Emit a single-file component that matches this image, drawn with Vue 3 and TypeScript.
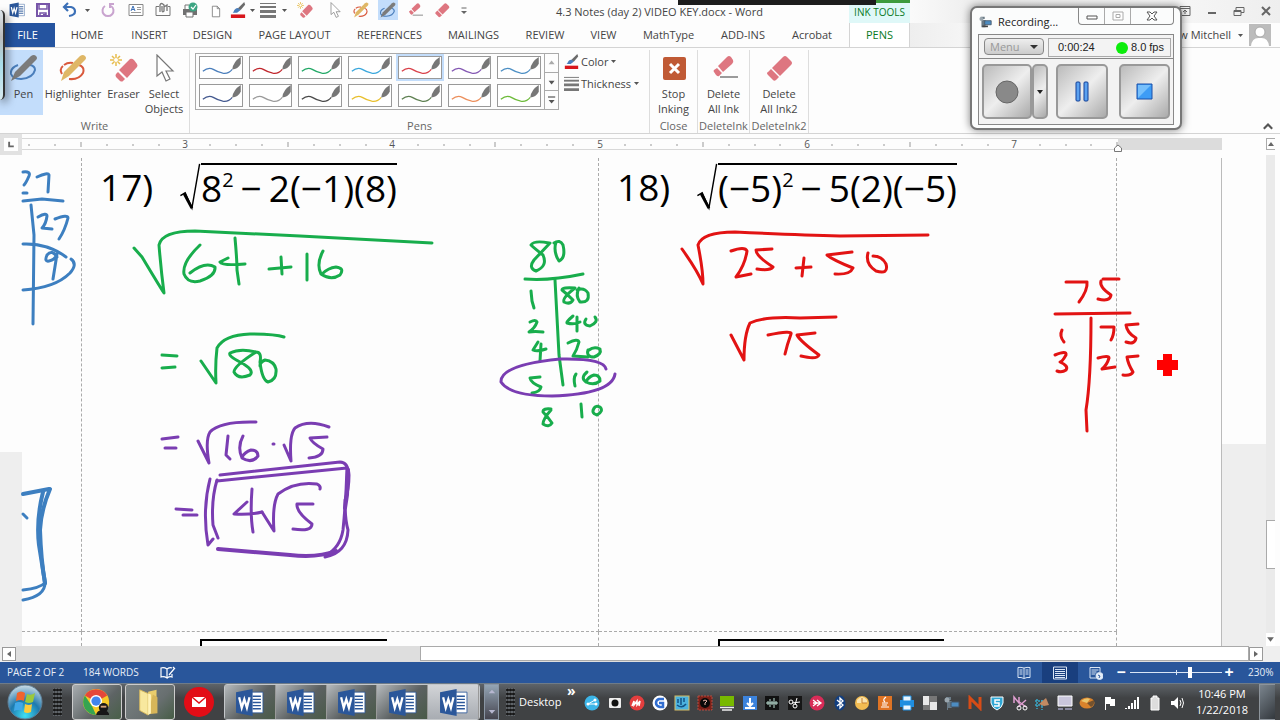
<script setup lang="ts">
interface Ink { color: string; width: number; strokes: string[] }

const tabs = ['HOME', 'INSERT', 'DESIGN', 'PAGE LAYOUT', 'REFERENCES', 'MAILINGS', 'REVIEW', 'VIEW', 'MathType', 'ADD-INS', 'Acrobat']
const quick = ['word', 'save', 'undo', 'caret', 'redo', 'card', 'clip', 'printer', 'page', 'color', 'caret', 'lines', 'caret', 'sparkle', 'cursor', 'highlighter', 'pen', 'erase-line', 'eraser', 'more']
const pens = ['#4a7ebb', '#c0262c', '#22a866', '#3aa7dc', '#d9414a', '#8458b3', '#4d8fc4', '#44598f', '#9a9a9a', '#4a4a4a', '#e8bf2d', '#5f8052', '#ec8f5c', '#6dbb3a']
const wordWindows = [1, 2, 3, 4, 5]
const tray = ['share', 'camera', 'm', 'g', 'finder', 'bug', 'monitor', 'download', 'wave', 'scissors', 'arrow', 'bluetooth', 'ball', 'java', 'print', 'blocks', 'recorder', 'n', 'shield', 'snip', 'tablet', 'display', 'disc', 'flag', 'signal', 'battery', 'sound']

const inks: Ink[] = [
  { color: '#3d7fc0', width: 3, strokes: [
    'M23 172Q31 171 29 176Q26 183 24 185M23 193h4', 'M37 177Q48 172 49 175L48 192', 'M23 201L42 199 63 201', 'M31 205L34 235 33 324',
    'M38 217Q47 212 47 216Q46 224 42 228L52 229', 'M55 219Q68 214 68 218Q65 230 59 239', 'M23 244Q48 243 66 257', 'M71 259Q78 264 70 273Q55 288 23 290',
    'M57 257Q52 249 47 255Q44 262 49 261Q55 260 57 254L53 279', 'M23 514L27 518', 'M23 590Q40 588 45 583Q45 596 23 600' ] },
  { color: '#3d7fc0', width: 4, strokes: ['M23 494L49 489', 'M50 489Q41 510 40 530Q41 560 45 583', 'M43 492Q36 520 39 545L45 583'] },
  { color: '#18ad4c', width: 3, strokes: [
    'M134 248L142 257Q160 287 164 293Q161 270 159 245Q162 231 195 231L300 236 432 243', 'M200 245Q182 262 184 274Q188 284 200 281Q216 276 215 267Q205 261 190 273',
    'M228 258L220 262Q222 266 245 264M235 238Q237 260 237 270L239 284', 'M269 269L291 267M281 257L282 274', 'M307 254L307 280',
    'M323 251Q316 264 321 274Q331 281 340 275Q345 268 336 267Q328 268 322 274', 'M162 355L177 356M162 368L175 367',
    'M201 361L216 383Q215 365 217 348Q224 335 250 334Q275 334 284 337', 'M256 352Q240 348 230 353Q228 356 240 362Q255 370 250 375Q238 380 234 372Q234 366 256 352Q262 352 260 362Q262 380 268 382Q277 380 276 369Q274 361 265 360Q260 362 260 366',
    'M549 243Q534 240 531 245Q534 248 543 255Q548 266 536 271Q528 268 534 260L550 243', 'M556 242Q553 252 559 261Q566 258 563 245Q560 239 554 243',
    'M525 279Q550 281 583 274', 'M555 280L559 355 563 385', 'M531 291L532 301 534 308',
    'M575 288Q562 287 562 290Q567 294 573 300Q570 305 564 302Q562 298 575 288', 'M579 288Q575 296 580 302Q590 303 588 293Q584 287 577 290',
    'M530 322Q536 319 537 322Q535 328 529 332Q535 331 543 332', 'M573 316Q566 322 567 323Q574 325 580 322M577 317L577 331', 'M586 319Q582 325 590 326Q599 322 595 317',
    'M538 342L533 350Q537 352 546 349M541 344L540 361', 'M568 343Q578 338 579 342Q577 350 573 356L588 357', 'M588 350Q586 357 594 357Q602 354 600 349Q594 346 589 350',
    'M540 377L530 378Q531 383 541 387Q540 392 532 393', 'M576 374Q573 378 575 386', 'M587 372Q580 378 586 382Q594 386 600 381Q600 375 594 375Q588 377 586 382',
    'M551 409Q543 408 543 412Q548 417 552 423Q549 428 543 424Q543 419 551 410', 'M581 404L582 417', 'M595 407Q590 413 597 415Q604 411 600 407Q596 405 594 408' ] },
  { color: '#7a3db2', width: 3, strokes: [
    'M606 369Q604 358 560 359Q500 365 501 382Q510 396 552 396Q612 394 615 374', 'M162 439L178 437M165 448L176 448', 'M198 441L209 463Q205 440 210 432Q220 421 256 422',
    'M228 436L226 455 230 459', 'M243 436Q237 447 242 458Q252 464 258 456Q258 450 251 450Q245 452 242 457', 'M273 444h1', 'M284 445L291 461Q289 435 295 428Q308 419 329 427',
    'M327 437L310 438Q312 443 323 449Q323 457 309 458', 'M217 480Q211 500 213 525L218 538', 'M210 479Q202 510 208 545L213 539', 'M176 509L192 510M183 515L197 515',
    'M247 502L234 514Q250 515 262 512M252 489Q250 515 253 532', 'M262 512L274 531Q272 505 278 494Q295 481 317 484Q321 486 320 489', 'M313 504L297 504Q296 512 312 524Q312 532 293 529',
    'M220 475L340 462Q348 462 349 475Q349 490 345 500Q345 520 348 530Q347 553 325 557', 'M217 481L347 468Q346 500 343 530Q340 548 326 555' ] },
  { color: '#7a3db2', width: 4, strokes: ['M218 549L290 555Q318 558 336 551', 'M348 470L347 495 345 508'] },
  { color: '#e21313', width: 3, strokes: [
    'M682 249Q697 270 703 284Q703 270 698 245Q702 232 735 232Q800 235 840 236L928 235', 'M731 251Q745 246 747 251Q745 265 736 277L751 274', 'M772 249L756 250Q756 256 773 267Q770 271 757 269',
    'M796 268L811 267M804 258L802 276', 'M852 252L827 255Q833 260 853 268Q850 275 835 274', 'M868 253Q865 264 876 271Q889 275 886 264Q882 256 873 256',
    'M731 335L744 360Q744 335 750 323Q765 316 800 318L836 317', 'M768 335Q793 330 791 334Q787 345 785 354', 'M815 333L797 335Q800 341 819 355Q817 360 801 356',
    'M1066 282L1087 282Q1088 290 1079 302', 'M1119 279L1103 279M1101 281Q1099 287 1111 295Q1110 302 1098 299', 'M1055 314L1130 313', 'M1091 318Q1091 380 1086 410L1087 431',
    'M1062 330Q1059 336 1064 342', 'M1101 327L1114 327Q1114 335 1111 340', 'M1138 324L1126 325Q1127 333 1136 338Q1135 345 1126 342',
    'M1055 355Q1067 350 1066 355Q1062 362 1060 362Q1069 366 1066 370Q1062 373 1057 371', 'M1098 358Q1109 355 1109 358Q1107 365 1102 369L1115 367', 'M1138 356L1127 357Q1128 364 1133 372Q1131 376 1123 375' ] },
]

const inch = 207.3
const ticks = Array.from({ length: 45 }, (_, i) => ({ x: Math.round(7 + i * inch / 8), kind: (i + 2) % 8 }))
const inches = [3, 4, 5, 6, 7].map((n) => ({ n, x: Math.round(163 + (n - 3) * inch) }))
</script>

<template>
  <div class="app">
    <svg class="defs" aria-hidden="true">
      <symbol id="i-pen" viewBox="0 0 28 28"><path d="M8 11Q0 14 1 20Q3 25 11 25Q23 24 25 16Q25 12 20 11" fill="none" stroke="#4a7ebb" stroke-width="2" /><path d="M1 27L5 18 21 2Q24 0 26 2Q28 4 26 6L10 22Z" fill="#7b7b7b" /></symbol>
      <symbol id="i-highlighter" viewBox="0 0 28 28"><path d="M4 12Q0 15 3 20M10 25Q20 26 24 19Q26 13 20 11M5 11Q9 8 14 9" fill="none" stroke="#d9593c" stroke-width="2" /><path d="M2 27L5 18 21 2Q24 0 26 2Q28 4 26 6L10 22Z" fill="#dfb766" /></symbol>
      <symbol id="i-eraser" viewBox="0 0 28 28"><path d="M7 14L18 3Q20 1 22 3L26 7Q28 9 26 11L15 22Z" fill="#de7680" /><path d="M6 15L14 23 11 26Q9 28 7 25L3 21Q1 19 3 18Z" fill="#de7680" /></symbol>
      <symbol id="i-sparkle" viewBox="0 0 28 28"><path d="M6 0v12M0 6h12M2 2l8 8M10 2l-8 8" stroke="#e7bd4e" stroke-width="1.5" /><circle cx="6" cy="6" r="2" fill="#fff" /><path d="M9 16L20 5Q22 4 24 6L27 10Q28 12 27 13L17 24Z" fill="#de7680" /><path d="M8 18L15 25 13 27Q12 28 10 27L6 23Q5 21 6 20Z" fill="#de7680" /></symbol>
      <symbol id="i-erase-line" viewBox="0 0 28 28"><path d="M8 12L17 3Q19 1 21 3L23 6Q24 8 22 10L13 18Z" fill="#de7680" /><path d="M7 14L12 19 9 22Q8 23 6 21L4 18Q3 17 4 16Z" fill="#de7680" /><path d="M10 23H28" stroke="#666" stroke-width="1.3" /></symbol>
      <symbol id="i-cursor" viewBox="0 0 28 28"><path d="M7 1V22L12 18 16 27 20 25 16 17H23Z" fill="#fff" stroke="#777" stroke-width="1.2" /></symbol>
      <symbol id="i-word" viewBox="0 0 28 28"><path d="M15 4h12v20H15z" fill="#fff" stroke="#2b579a" stroke-width=".8" /><path d="M17 8h8M17 11h8M17 14h8M17 17h8M17 20h8" stroke="#2b579a" stroke-width="1.3" /><path d="M1 4L17 1V27L1 24Z" fill="#2b579a" /><path d="M4 9l2.500 10L9 11l2.500 8L14 9" fill="none" stroke="#fff" stroke-width="2.200" /></symbol>
      <symbol id="i-color" viewBox="0 0 18 18"><path d="M4 11Q6 6 10 7L12 9 8 12H3Z" fill="#4a7ebb" /><path d="M9 7L16 0 17 3 12 9Z" fill="#6b6b6b" /><rect x="1" y="14" width="16" height="4" fill="#d8161c" /></symbol>
      <symbol id="i-lines" viewBox="0 0 16 16"><path d="M0 1.5h16" stroke="#777" /><path d="M0 5h16" stroke="#777" stroke-width="2" /><path d="M0 9.500h16M0 14.500h16" stroke="#777" stroke-width="3" /></symbol>
      <symbol id="i-save" viewBox="0 0 16 16"><path d="M2 2h12v12H2z" fill="#fff" stroke="#7755a8" stroke-width="2" /><path d="M4 2v5h8V2M5 15v-4h6v4" fill="none" stroke="#7755a8" stroke-width="1.500" /><path d="M8 12h3v3H8z" fill="#7755a8" /></symbol>
      <symbol id="i-undo" viewBox="0 0 16 16"><path d="M3 5H10Q14 6 14 9.500Q14 13 8 14M7 1L3 5l4 4" fill="none" stroke="#3c70b7" stroke-width="2.200" /></symbol>
      <symbol id="i-redo" viewBox="0 0 16 16"><path d="M11 4A5.500 5.500 0 1 1 5 4M9 2h5M10 1v5" fill="none" stroke="#c9a4cf" stroke-width="2" /></symbol>
      <symbol id="i-card" viewBox="0 0 16 16"><path d="M1 2.500h14v11H1z" fill="#fff" stroke="#888" /><path d="M9 5.500h4M9 7.500h4M3 10.500h10" stroke="#999" /><path d="M3 9l2-5 2 5M4 7.500h2" fill="none" stroke="#3c70b7" /></symbol>
      <symbol id="i-clip" viewBox="0 0 16 16"><path d="M4 4.500H1v9h14v-9h-2" fill="none" stroke="#777" /><path d="M5 10V3Q6 0 9 3V9Q7 11 7 8V4M9 5l3-2v6" fill="none" stroke="#777" stroke-width="1.300" /></symbol>
      <symbol id="i-printer" viewBox="0 0 16 16"><path d="M1 7h14v6H1z" fill="#707070" /><path d="M4 10h7v5H4z" fill="#fff" stroke="#707070" /><path d="M3 7V3h4" fill="none" stroke="#777" /><circle cx="11" cy="5" r="4.500" fill="#3da583" /><path d="M9 5l2 2 3-4" fill="none" stroke="#fff" stroke-width="1.200" /></symbol>
      <symbol id="i-page" viewBox="0 0 16 16"><path d="M3.500 1.500h6l3 3v10h-9zM9.500 1.500v3h3" fill="#fff" stroke="#777" /></symbol>
      <symbol id="i-caret" viewBox="0 0 6 16"><path d="M1 7h5l-2.500 3z" fill="#555" /></symbol>
      <symbol id="i-more" viewBox="0 0 8 16"><path d="M1.500 6h5" stroke="#666" /><path d="M1 9h6l-3 3z" fill="#666" /></symbol>
      <symbol id="i-recorder" viewBox="0 0 16 16"><path d="M2 2h5v3H2zM3 6h5v9H3z" fill="#697985" /><circle cx="3" cy="5" r="2.500" fill="#9aa6ae" /><path d="M7 7h8v5H7z" fill="#4d8cc1" stroke="#456" /><path d="M4 14h7" stroke="#444" stroke-width="2" /></symbol>
    </svg>

    <header class="title-bar">
      <nav class="quick" aria-label="Quick access">
        <button v-for="(q, i) in quick" :key="i" :class="{ active: q === 'pen' }" :aria-label="q"><svg :class="q"><use :href="'#i-' + q" /></svg></button>
      </nav>
      <div class="doc-title">4.3 Notes (day 2) VIDEO KEY.docx - Word</div>
      <div class="context">INK TOOLS</div>
      <div class="sys">
        <button aria-label="Ribbon display options"><svg viewBox="0 0 12 12"><path d="M1 1.500h10v9H1zM1 3.500h10M6 9V5M4 7l2-2 2 2" /></svg></button>
        <button aria-label="Minimize"><svg viewBox="0 0 12 12"><path class="bold" d="M2 8h8" /></svg></button>
        <button aria-label="Restore"><svg viewBox="0 0 12 12"><path d="M1 5.500h7v5H1zM3 5V2.500h8v5H8M1 6.500h7" /></svg></button>
        <button aria-label="Close"><svg viewBox="0 0 12 12"><path class="bold" d="M2 2l8 8M10 2l-8 8" /></svg></button>
      </div>
      <div class="black-bar"></div>
    </header>

    <nav class="tabs" aria-label="Ribbon tabs">
      <button class="file">FILE</button>
      <button v-for="t in tabs" :key="t">{{ t }}</button>
      <button class="selected">PENS</button>
      <div class="account"><span>Matthew Mitchell</span><svg class="caret"><use href="#i-caret" /></svg>
        <svg class="avatar" viewBox="0 0 22 22"><path d="M0 0h22v22H0z" fill="#bcbcbc" /><circle cx="11" cy="8" r="5" fill="#fff" stroke="#aaa" /><path d="M2 22Q3 13 11 14Q19 13 20 22Z" fill="#fff" /></svg>
      </div>
    </nav>

    <section class="ribbon" aria-label="Pens">
      <div class="group write">
        <div class="tools">
          <button class="big on"><svg><use href="#i-pen" /></svg><span>Pen</span></button>
          <button class="big"><svg><use href="#i-highlighter" /></svg><span>Highlighter</span></button>
          <button class="big"><svg><use href="#i-sparkle" /></svg><span>Eraser</span></button>
          <button class="big"><svg><use href="#i-cursor" /></svg><span>Select<br>Objects</span></button>
        </div>
        <div class="caption">Write</div>
      </div>
      <div class="group pens">
        <div class="tools">
          <div class="gallery">
            <div class="swatches">
              <button v-for="(c, i) in pens" :key="i" :class="{ chosen: i === 4 }" :aria-label="'Pen ' + (i + 1)">
                <svg viewBox="0 0 44 22"><path d="M3 15Q9 10 14 13T24 17Q30 18 34 13" fill="none" :stroke="c" stroke-width="1.300" /><path d="M34 13Q35 5 43 0V7Q40 13 34 13Z" fill="#777" /></svg>
              </button>
            </div>
            <div class="scrollers">
              <button aria-label="Previous row"><svg viewBox="0 0 10 10"><path d="M3 6h5L5.500 3z" fill="#aaa" /></svg></button>
              <button aria-label="Next row"><svg viewBox="0 0 10 10"><path d="M3 4h5L5.500 7z" fill="#555" /></svg></button>
              <button aria-label="More pens"><svg viewBox="0 0 10 10"><path d="M2.500 2.500h6" stroke="#555" /><path d="M3 5h5L5.500 8z" fill="#555" /></svg></button>
            </div>
          </div>
          <div class="options">
            <button><svg class="ico"><use href="#i-color" /></svg>Color<svg class="caret"><use href="#i-caret" /></svg></button>
            <button><svg class="ico"><use href="#i-lines" /></svg>Thickness<svg class="caret"><use href="#i-caret" /></svg></button>
          </div>
        </div>
        <div class="caption">Pens</div>
      </div>
      <div class="group close">
        <div class="tools"><button class="big"><svg viewBox="0 0 28 28"><rect x="3" y="3" width="23" height="23" rx="2" fill="#c05a35" /><path d="M10 10l9 9M19 10l-9 9" stroke="#fff" stroke-width="3" /></svg><span>Stop<br>Inking</span></button></div>
        <div class="caption">Close</div>
      </div>
      <div class="group delete">
        <div class="tools"><button class="big"><svg><use href="#i-erase-line" /></svg><span>Delete<br>All Ink</span></button></div>
        <div class="caption">DeleteInk</div>
      </div>
      <div class="group delete2">
        <div class="tools"><button class="big"><svg><use href="#i-eraser" /></svg><span>Delete<br>All Ink2</span></button></div>
        <div class="caption">DeleteInk2</div>
      </div>
      <button class="collapse" aria-label="Collapse the ribbon"><svg viewBox="0 0 10 10"><path d="M2 7l3-3 3 3" fill="none" stroke="#555" stroke-width="1.500" /></svg></button>
    </section>

    <div class="ruler">
      <button class="tab-stop" aria-label="Tab stop"><svg viewBox="0 0 14 14"><path d="M5 4v5h5" fill="none" stroke="#666" stroke-width="2" /></svg></button>
      <div class="scale">
        <svg>
          <template v-for="t in ticks" :key="t.x"><path v-if="t.kind !== 0" :d="t.kind === 4 ? `M${t.x} 8v5` : `M${t.x} 10v2`" stroke="#999" /></template>
          <text v-for="n in inches" :key="n.n" :x="n.x" y="14">{{ n.n }}</text>
        </svg>
      </div>
      <div class="beyond"><svg viewBox="0 0 10 8"><path d="M1.500 7.500V4L5 1l3.500 3v3.500z" fill="#fff" stroke="#777" /></svg></div>
      <button class="up" aria-label="Scroll up"><svg viewBox="0 0 8 8"><path d="M1 6h6L4 2z" fill="#666" /></svg></button>
    </div>

    <main class="document">
      <div class="page">
        <div class="outside left"></div>
        <div class="cell first"></div>
        <div class="cell problem">
          <span class="number">17)</span>
          <span class="root"><svg viewBox="0 0 22 50"><path d="M1 34l5-3 7 16L21 1" fill="none" stroke="#000" stroke-width="1.500" /><path d="M5 32l8 15" stroke="#000" stroke-width="3" /></svg><span class="radicand">8<sup>2</sup><span class="op">−</span>2(−1)(8)</span></span>
        </div>
        <div class="cell problem">
          <span class="number">18)</span>
          <span class="root"><svg viewBox="0 0 22 50"><path d="M1 34l5-3 7 16L21 1" fill="none" stroke="#000" stroke-width="1.500" /><path d="M5 32l8 15" stroke="#000" stroke-width="3" /></svg><span class="radicand">(−5)<sup>2</sup><span class="op">−</span>5(2)(−5)</span></span>
        </div>
        <div class="margin"></div>
        <div class="outside right"></div>
        <div class="cell next first"></div>
        <div class="cell next"><i class="peek"></i></div>
        <div class="cell next"><i class="peek wide"></i></div>
        <div class="margin next"></div>
      </div>
      <div class="vscroll"><div class="vthumb"></div><svg viewBox="0 0 8 8"><path d="M1 2h6L4 6z" fill="#666" /></svg></div>
      <svg class="ink" viewBox="0 155 1280 491" role="img" aria-label="Handwritten working for problems 17 and 18">
        <g v-for="(ink, i) in inks" :key="i" :stroke="ink.color" :stroke-width="ink.width"><path v-for="(s, j) in ink.strokes" :key="j" :d="s" /></g>
        <path class="pointer" d="M1163 354h9v6h6v10h-6v6h-9v-6h-6v-10h6z" />
      </svg>
    </main>

    <div class="hscroll">
      <button aria-label="Scroll left"><svg viewBox="0 0 8 8"><path d="M6 1v6L2 4z" fill="#666" /></svg></button>
      <div class="htrack"><div class="hthumb"></div></div>
      <button aria-label="Scroll right"><svg viewBox="0 0 8 8"><path d="M2 1v6l4-3z" fill="#666" /></svg></button>
    </div>

    <footer class="status">
      <span class="pages">PAGE 2 OF 2</span><span class="words">184 WORDS</span>
      <svg class="proof" viewBox="0 0 16 14"><path d="M7 3Q4 1 1 2v9q3-1 6 1zM7 3q3-2 5-1M7 12q3-2 5-1V8M9 9l5-6M13 1l2 2" fill="none" stroke="#fff" stroke-width="1.200" /></svg>
      <div class="views">
        <button aria-label="Read mode"><svg viewBox="0 0 14 14"><path d="M7 2Q4 1 1 1.500v10Q4 11 7 12.500Q10 11 13 11.500v-10Q10 1 7 2v10M2.500 4h3M2.500 6h3M2.500 8h3M8.500 4h3M8.500 6h3M8.500 8h3" /></svg></button>
        <button class="current" aria-label="Print layout"><svg viewBox="0 0 14 14"><path d="M.5 1h13v12H.5zM2 3.500h10M2 5.500h10M2 7.500h10M2 9.500h10M2 11.500h10" /></svg></button>
        <button aria-label="Web layout"><svg viewBox="0 0 14 14"><path d="M7 12H1V1.500h10V6M2.500 4h7M2.500 6h5M2.500 8h4" /><circle cx="10.500" cy="10" r="3.500" fill="#e5edf8" /><path d="M9 9l2 1-1 2" class="blue" /></svg></button>
      </div>
      <button class="zoom-btn" aria-label="Zoom out">−</button>
      <input class="zoom" type="range" min="10" max="500" value="332" aria-label="Zoom">
      <button class="zoom-btn" aria-label="Zoom in">+</button>
      <span class="percent">230%</span>
    </footer>

    <div class="taskbar">
      <button class="start" aria-label="Start"><svg viewBox="0 0 36 36">
        <defs><radialGradient id="orb" cx=".5" cy=".9" r=".9"><stop offset="0" stop-color="#3fe0f4" /><stop offset=".5" stop-color="#1d79ae" /><stop offset="1" stop-color="#cfdde6" /></radialGradient></defs>
        <circle cx="18" cy="18" r="17" fill="url(#orb)" stroke="#5e7f98" /><path d="M10 9q4-3 8 0l-1 8q-4-2-8 0z" fill="#f0642d" /><path d="M20 10q4 2 8-1l-2 9q-4 2-8 0z" fill="#9bc93c" /><path d="M8 19q4-2 8 0l-1 8q-4-2-8 0z" fill="#41a8e8" /><path d="M18 20q4 2 7 0l-1 8q-4 2-7 0z" fill="#fbcb3c" /></svg></button>
      <i class="grip"></i>
      <button class="task chrome" aria-label="Chrome"><svg viewBox="0 0 30 30"><circle cx="14" cy="15" r="14" fill="#f7c928" /><path d="M14 15L2 8A14 14 0 0 1 26 8Z" fill="#e5473a" /><path d="M2 8L10 20 14 29A14 14 0 0 1 2 8" fill="#36a451" /><circle cx="14" cy="14" r="6.500" fill="#fff" /><circle cx="14" cy="14" r="5" fill="#4284ee" /><circle cx="22" cy="21" r="5" fill="#171717" /><path d="M14 29q1-6 8-5 6 0 6 5z" fill="#171717" /><path d="M19 20h6" stroke="#d8a47b" stroke-width="2" /></svg></button>
      <button class="task folder" aria-label="Explorer"><svg viewBox="0 0 30 30"><path d="M13 4l9-2v22l-9 3z" fill="#e9cd6c" /><path d="M18 7l5 3v17l-10 1z" fill="#d7b659" /><path d="M4 2l9 4v23l-9-5z" fill="#f8e89e" stroke="#d6b85c" /><path d="M13 6l3 1v20l-3 2z" fill="#fff3b8" /></svg></button>
      <button class="mail" aria-label="Mail"><svg viewBox="0 0 30 30"><circle cx="15" cy="15" r="15" fill="#e20d16" /><path d="M8 10h14v10H8z" fill="#fff" /><path d="M8 10l7 6 7-6" fill="none" stroke="#e20d16" stroke-width="1.500" /></svg></button>
      <div class="stack"><button v-for="n in wordWindows" :key="n" :class="{ front: n === 5 }" :aria-label="'Word window ' + n"><svg><use href="#i-word" /></svg></button></div>
      <div class="task-scroll"><svg viewBox="0 0 14 34"><path d="M4 9h7L7.500 5zM4 27h7l-3.500 4z" fill="#b7b7d0" /></svg></div>
      <i class="grip second"></i>
      <span class="desktop">Desktop</span><span class="chevrons">»</span>
      <div class="tray">
        <svg v-for="t in tray" :key="t" viewBox="0 0 16 16">
          <template v-if="t === 'share'"><circle cx="8" cy="8" r="7.500" fill="#3cb5e8" /><path d="M4 9l7-4M4 9h8" stroke="#fff" /><circle cx="4" cy="9" r="1.500" fill="#fff" /><circle cx="11" cy="5" r="1.500" fill="#fff" /><circle cx="12" cy="9" r="1.500" fill="#fff" /></template>
          <template v-else-if="t === 'camera'"><rect x="2" y="3" width="12" height="10" rx="1" fill="#eee" /><circle cx="8" cy="8" r="3.500" fill="#111" /></template>
          <template v-else-if="t === 'm'"><circle cx="8" cy="8" r="7.500" fill="#e33e3e" /><path d="M3 11l2-5v4l3-4v4l3-4-1 5" fill="none" stroke="#fff" stroke-width="1.500" /></template>
          <template v-else-if="t === 'g'"><circle cx="8" cy="8" r="7.500" fill="#fff" /><path d="M12 4H7Q4 5 4 8t4 4h3V8H7" fill="none" stroke="#316ed1" stroke-width="2.500" /></template>
          <template v-else-if="t === 'finder'"><rect x="1" y="1" width="14" height="14" fill="#4bb3df" stroke="#d5bd66" /><path d="M4 4v4M10 3v4M3 10q5 4 9-1M7 3v7" fill="none" stroke="#135386" stroke-width="1.500" /></template>
          <template v-else-if="t === 'bug'"><rect x="1" y="1" width="14" height="14" fill="#7a2018" stroke="#b64f43" stroke-dasharray="2 1" /><circle cx="8" cy="8" r="5" fill="#090909" /><path d="M6 6q2-2 4 0l-2 2v2" fill="none" stroke="#e8b5a7" /></template>
          <template v-else-if="t === 'monitor'"><path d="M1 1h14v10H1z" fill="#78b900" /><path d="M1 12.500h14M3 15h10" stroke="#eee" stroke-width="1.500" /></template>
          <template v-else-if="t === 'download'"><path d="M1 1h14v14H1z" fill="#3c83dc" /><path d="M8 3v7M5 8l3 3 3-3M3 13h10" fill="none" stroke="#fff" stroke-width="2" /></template>
          <template v-else-if="t === 'wave'"><path d="M1 1h14v14H1z" fill="#111" /><path d="M2 8h12M4 6v4M6 4v8M8 6v4M10 3v10M12 6v4" stroke="#bde1d5" /></template>
          <template v-else-if="t === 'scissors'"><path d="M1 1h14v14H1z" fill="#161616" /><circle cx="4" cy="7" r="2" fill="none" stroke="#fff" /><circle cx="8" cy="11" r="2" fill="none" stroke="#fff" /><path d="M5 8l8-1M8 10l2-7" stroke="#fff" /></template>
          <template v-else-if="t === 'arrow'"><circle cx="8" cy="8" r="7.500" fill="#d82c58" /><path d="M4 5l4 3-4 3M8 5l4 3-4 3M4 8h7" fill="none" stroke="#fff" stroke-width="1.300" /></template>
          <template v-else-if="t === 'bluetooth'"><ellipse cx="8" cy="8" rx="5.500" ry="7.500" fill="#123f80" /><path d="M5 5l6 5-3 3V3l3 3-6 5" fill="none" stroke="#fff" stroke-width="1.300" /></template>
          <template v-else-if="t === 'ball'"><circle cx="8" cy="8" r="7" fill="#f2bc52" /><path d="M3 5q5-6 10 0v3H3z" fill="#fae4ae" /><path d="M8 3v5h5" fill="none" stroke="#c78030" /></template>
          <template v-else-if="t === 'java'"><path d="M1 1h14v14H1z" fill="#e07424" /><path d="M9 2q-4 3-1 5M5 8h6M5 10h5M4 12h8" fill="none" stroke="#fff" stroke-width="1.200" /></template>
          <template v-else-if="t === 'print'"><path d="M1 5h14v7H1z" fill="#1f8ee0" /><path d="M4 1h8v5H4zM4 10h8v5H4z" fill="#e9f6ff" stroke="#1f8ee0" /></template>
          <template v-else-if="t === 'blocks'"><path d="M1 1h14v14H1z" fill="#777" /><path d="M1 1h6v9H1zM8 7h7v8H8z" fill="#e8e8e8" /></template>
          <use v-else-if="t === 'recorder'" href="#i-recorder" />
          <path v-else-if="t === 'n'" d="M3 14V3l10 10V2" fill="none" stroke="#d84c16" stroke-width="3" />
          <template v-else-if="t === 'shield'"><path d="M2 2h12v6q-1 5-6 7-5-2-6-7z" fill="#2fa7d5" stroke="#fff" /><path d="M11 5H6v3h4v3H5" fill="none" stroke="#fff" stroke-width="1.500" /></template>
          <template v-else-if="t === 'snip'"><path d="M2 8V2l5 6V2M14 5l-8 7M6 6l8 6" fill="none" stroke="#df9fd1" stroke-width="1.500" /><circle cx="7" cy="13" r="2" fill="none" stroke="#fff" /><circle cx="13" cy="13" r="2" fill="none" stroke="#fff" /></template>
          <template v-else-if="t === 'tablet'"><path d="M1 6h9M1 10h9M3 4v10M8 5v10" stroke="#38a8c7" stroke-dasharray="2 1" stroke-width="1.500" /><path d="M5 9l7-6 3 7-5 1z" fill="#c28b63" /></template>
          <template v-else-if="t === 'display'"><path d="M1 1h14v10H1z" fill="#c9c6dc" stroke="#fff" /><path d="M1 13h5v2H1zM8 13h7v2H8z" fill="#8889a0" /></template>
          <template v-else-if="t === 'disc'"><ellipse cx="8" cy="8" rx="7.500" ry="5.500" fill="#d9822b" /><path d="M8 8l7-3q1 5-3 7z" fill="#74522e" /><path d="M2 6q5-4 9-2L8 8z" fill="#eac56c" /></template>
          <path v-else-if="t === 'flag'" d="M3 1v14h1V9h4v2h5V4H9V2H3z" fill="#fff" />
          <path v-else-if="t === 'signal'" d="M1 13h2v1H1zM4 11h2v3H4zM7 8h2v6H7zM10 5h2v9h-2zM13 2h2v12h-2z" fill="#fff" />
          <path v-else-if="t === 'battery'" d="M6 1h4v2h2v12H4V3h2z" fill="#ddd" stroke="#fff" />
          <template v-else><path d="M2 6h3l4-4v12l-4-4H2z" fill="#fff" /><path d="M11 5q2 3 0 6M13 3q3 5 0 10" fill="none" stroke="#fff" /></template>
        </svg>
      </div>
      <time class="clock"><span>10:46 PM</span><span>1/22/2018</span></time>
      <button class="peek-desktop" aria-label="Show desktop"></button>
    </div>

    <aside class="recorder" aria-label="Recorder">
      <div class="rec-title"><svg><use href="#i-recorder" /></svg><span>Recording...</span>
        <div class="rec-sys">
          <button aria-label="Minimize recorder"><svg viewBox="0 0 14 14"><path d="M2 7h10v3H2z" fill="#fff" stroke="#555" /></svg></button>
          <button aria-label="Maximize recorder"><svg viewBox="0 0 14 14"><path d="M2 3h10v8H2zM5 5.500h4v3H5z" fill="#fff" stroke="#aaa" /></svg></button>
          <button aria-label="Close recorder"><svg viewBox="0 0 14 14"><path d="M2 3h3l2 2 2-2h3L9 7l3 4H9L7 9l-2 2H2l3-4z" fill="#fff" stroke="#555" /></svg></button>
        </div>
      </div>
      <div class="rec-body">
        <div class="rec-info"><button class="menu">Menu<svg class="caret" viewBox="0 0 8 8"><path d="M0 2h8L4 6z" fill="#333" /></svg></button><div class="time"><span>0:00:24</span><span class="fps"><i></i>8.0 fps</span></div></div>
        <div class="rec-controls">
          <button class="rec" aria-label="Record"><svg viewBox="0 0 24 24"><circle cx="12" cy="12" r="11" fill="#898989" stroke="#666" /></svg></button>
          <button class="drop" aria-label="Record options"><svg viewBox="0 0 8 8"><path d="M1 2h6L4 6z" fill="#222" /></svg></button>
          <button class="pause" aria-label="Pause"><svg viewBox="0 0 24 24"><rect x="6" y="2" width="4" height="19" rx="1" fill="#5ba1f0" stroke="#123f96" /><rect x="14" y="2" width="4" height="19" rx="1" fill="#5ba1f0" stroke="#123f96" /></svg></button>
          <button class="stop" aria-label="Stop"><svg viewBox="0 0 24 24"><path d="M5 4h15v15H5z" fill="#3d9cf6" stroke="#1b4fa8" /><path d="M6 18V5h13z" fill="#77c0fc" /></svg></button>
        </div>
      </div>
    </aside>
    <div class="edge-window"></div>
  </div>
</template>

<style>
html, body { margin: 0; overflow: hidden; }
#app { height: 100vh; }
</style>

<style scoped>
* { box-sizing: border-box; }
.app { position: relative; display: flex; flex-direction: column; height: 100vh; overflow: hidden; background: #fdfdfd; color: #444; font: 11px/15px "Open Sans", "Noto Sans", sans-serif; }
button { margin: 0; padding: 0; border: 0; background: none; color: inherit; font: inherit; }
svg { display: block; flex: none; }
.defs { position: absolute; width: 0; height: 0; }

.title-bar { position: relative; display: flex; flex: 0 0 23px; align-items: stretch; background: linear-gradient(90deg, #fdfdfd 70%, #eee 76%, #f8f8f8 90%, #eee); }
.quick { display: grid; flex: 0 0 473px; padding-left: 4px; grid-template-columns: 26px 26px 25px 12px 29px 27px 27px 27px 26px 18px 10px 22px 9px 34px 25px 27px 27px 27px 27px 18px; }
.quick button { display: grid; place-items: center; height: 20px; }
.quick svg { width: 16px; height: 16px; }
.quick .caret { width: 6px; }
.quick .more { width: 8px; }
.quick .active { justify-self: center; width: 20px; background: #c3ddfb; }
.doc-title { flex: 0 0 376px; padding-top: 4px; padding-left: 83px; white-space: nowrap; }
.context { flex: 0 0 61px; padding-top: 1px; border-top: 3px solid #3c9b3c; background: #dff8f8; color: #0a7a1e; font-size: 10px; line-height: 17px; text-align: center; }
.black-bar { position: absolute; top: 0; left: 678px; width: 198px; height: 5px; background: #1d1d1d; }
.sys { display: flex; margin-left: auto; }
.sys button { width: 27px; padding: 0 7px; }
.sys svg { width: 12px; height: 12px; margin-top: -2px; fill: none; stroke: #666; }
.sys .bold { stroke-width: 2; }

.tabs { display: grid; flex: 0 0 24px; grid-template-columns: 55px 64px 61px 65px 99px 91px 77px 66px 51px 79px 70px 68px 3px 61px 1fr; border-bottom: 1px solid #d4d4d4; line-height: 24px; }
.tabs > button { white-space: nowrap; }
.tabs .file { background: #2554a0; color: #fff; }
.tabs .selected { grid-column: 14; height: 24px; border: 1px solid #d4d4d4; border-width: 0 1px; background: #fff; color: #0a7a1e; }
.account { display: flex; align-items: center; justify-content: flex-end; gap: 6px; padding-right: 9px; background: linear-gradient(90deg, #eee, #fdfdfd 30%); white-space: nowrap; }
.caret { width: 6px; height: 16px; }
.account .avatar { width: 22px; height: 22px; }

.ribbon { display: flex; flex: 0 0 86px; padding-top: 2px; border-bottom: 1px solid #d4d4d4; }
.group { display: flex; flex-direction: column; justify-content: space-between; height: 83px; border-right: 1px solid #ddd; }
.tools { display: flex; }
.caption { color: #666; text-align: center; }
.write { flex: 0 0 190px; }
.write .tools { display: grid; grid-template-columns: 43px 60px 41px 40px; }
.big { display: flex; flex-direction: column; align-items: center; height: 65px; padding-top: 4px; white-space: nowrap; }
.big svg { width: 28px; height: 28px; margin-bottom: 4px; }
.big.on { padding-left: 4px; background: #c3ddfb; }
.pens { flex: 0 0 460px; }
.pens .tools { padding: 3px 0 0 5px; gap: 5px; }
.gallery { display: flex; width: 364px; height: 57px; border: 1px solid #aaa; }
.swatches { display: grid; flex: 1; grid-template-columns: repeat(7, 1fr); grid-template-rows: 23px 23px; gap: 5px 6px; padding: 2px 3px; }
.swatches button { border: 1px solid #999; background: #fff; }
.swatches svg { width: 100%; height: 21px; }
.chosen { outline: 2px solid #c3ddfb; }
.scrollers { display: flex; flex: 0 0 14px; flex-direction: column; border-left: 1px solid #aaa; }
.scrollers button { flex: 1; border-bottom: 1px solid #aaa; }
.scrollers button:last-child { border-bottom: 0; }
.scrollers svg { width: 12px; height: 12px; }
.options { display: flex; flex-direction: column; gap: 6px; }
.options button { display: flex; align-items: center; gap: 2px; height: 16px; white-space: nowrap; }
.options .ico { width: 15px; height: 15px; }
.close { flex: 0 0 48px; }
.delete { flex: 0 0 52px; }
.delete2 { flex: 0 0 59px; }
.close .tools, .delete .tools, .delete2 .tools { justify-content: center; }
.collapse { align-self: flex-end; width: 14px; height: 14px; margin-left: auto; margin-right: 5px; }

.ruler { display: flex; flex: 0 0 21px; align-items: flex-start; }
.tab-stop { flex: 0 0 22px; height: 21px; padding: 4px; background: #e2e2e2; }
.tab-stop svg { width: 14px; height: 13px; background: #fff; }
.scale { flex: 0 0 1096px; height: 12px; margin-top: 4px; border: 1px solid #d8d8d8; border-width: 1px 0; overflow: hidden; }
.scale svg { width: 100%; height: 22px; margin-top: -5px; }
.scale text { fill: #555; font-size: 10px; text-anchor: middle; }
.beyond { flex: 0 0 104px; height: 12px; margin-top: 4px; background: #dcdcdc; }
.beyond svg { width: 10px; height: 8px; margin: 6px 0 0 -5px; }
.up { width: 9px; height: 12px; margin: 4px 5px 0 auto; border: 1px solid #aaa; border-right: 0; }

.document { position: relative; display: flex; flex: 1 1 492px; min-height: 0; overflow: hidden; }
.page { display: grid; flex: 1; grid-template-columns: 22px 60px 517px 518px 105px 1fr; grid-template-rows: 1fr 14px; padding-top: 3px; }
.outside { grid-row: 1 / 3; background: linear-gradient(#fdfdfd 294px, #eee 294px); }
.outside.right { grid-column: 6; background: linear-gradient(#fdfdfd 286px, #eee 286px); }
.cell { border-right: 1px dashed #aaa; border-bottom: 1px dashed #aaa; }
.margin { border-right: 1px solid #bbb; }
.next { border-bottom: 0; }
.cell.next.first { grid-column: 2; }
.problem { display: flex; align-items: flex-start; padding: 5px 0 0 18px; color: #000; font: 37px/48px "Open Sans", sans-serif; white-space: nowrap; }
.number { flex: 0 0 79px; }
.root { display: flex; }
.root svg { width: 22px; height: 48px; }
.radicand { display: flex; height: 48px; border-top: 2px solid #000; line-height: 46px; }
sup { font-size: 20px; line-height: 30px; vertical-align: baseline; }
.op { padding: 0 7px; }
.peek { display: block; width: 187px; height: 7px; margin: 7px 0 0 118px; border: 2px solid #000; border-width: 2px 0 0 2px; }
.peek.wide { width: 226px; margin-left: 119px; }
.vscroll { display: flex; flex: 0 0 14px; flex-direction: column; justify-content: flex-end; width: 14px; border-right: 5px solid #fdfdfd; background: #eaeaea; }
.vthumb { height: 49px; margin-bottom: 64px; border: 1px solid #aaa; border-right: 0; background: #fff; }
.vscroll svg { width: 9px; height: 13px; background: #fff; }
.ink { position: absolute; top: 0; left: 0; width: 1280px; height: 491px; fill: none; stroke-linecap: round; stroke-linejoin: round; }
.ink .pointer { fill: #f00; stroke: none; }

.hscroll { display: flex; flex: 0 0 16px; align-items: center; padding: 0 17px 0 2px; background: #efefef; }
.hscroll button { display: grid; place-items: center; width: 14px; height: 14px; border: 1px solid #999; background: #fff; }
.hscroll svg { width: 8px; height: 8px; }
.htrack { display: flex; flex: 1; height: 16px; padding-left: 404px; background: #dedede; }
.hthumb { flex: 1; height: 15px; border: 1px solid #aaa; background: #fff; }

.status { display: flex; flex: 0 0 21px; align-items: center; padding: 0 5px 0 7px; background: #29569b; color: #e8eef7; font-size: 10px; white-space: nowrap; }
.pages { width: 76px; }
.words { width: 77px; }
.proof { width: 16px; height: 14px; }
.views { display: flex; margin-left: auto; }
.views button { display: grid; place-items: center; width: 36px; height: 21px; }
.views .current { background: #193f7e; }
.views svg { width: 14px; height: 14px; fill: none; stroke: #d9e5f5; }
.views .blue { stroke: #29569b; }
.zoom-btn { width: 12px; margin-left: 1px; color: #fff; font-size: 16px; font-weight: bold; }
.zoom { width: 92px; height: 14px; margin: 0 0 0 3px; appearance: none; background: linear-gradient(#d9e5f5, #d9e5f5) center / 100% 1px no-repeat, linear-gradient(#d9e5f5, #d9e5f5) center / 1px 5px no-repeat; }
.zoom::-webkit-slider-thumb { appearance: none; width: 4px; height: 11px; background: #fff; }
.percent { width: 40px; padding-left: 13px; }

.taskbar { display: flex; flex: 0 0 37px; align-items: stretch; padding-right: 5px; border-top: 1px solid #6e7b88; background: linear-gradient(rgba(130, 140, 150, .45), rgba(40, 40, 40, 0) 14px), #404244; color: #fff; }
.start { flex: 0 0 51px; padding-left: 7px; }
.start svg { width: 36px; height: 36px; }
.grip { flex: 0 0 9px; margin: 4px 10px 4px 2px; background: radial-gradient(circle, #161616 1px, #71777d 2px, transparent 2px) 0 0 / 3px 4px; }
.task { display: grid; place-items: center; flex: 0 0 50px; margin-right: 3px; border: 1px solid #ccc; border-radius: 3px; background: linear-gradient(135deg, #a8adb0, #5e6465 60%, #496048); }
.task svg { width: 28px; height: 30px; }
.folder { background: linear-gradient(135deg, #7b8385, #686f70 60%, #465c45); }
.mail { display: grid; place-items: center; flex: 0 0 46px; }
.mail svg { width: 30px; height: 30px; margin-right: 4px; }
.stack { display: grid; flex: 0 0 256px; grid-template-columns: repeat(5, 1fr); border: 1px solid #c4c7ca; border-radius: 3px; }
.stack button { display: grid; place-items: center; border-right: 1px solid #999; background: linear-gradient(135deg, #b6babd, #5c6162 55%, #495a48); }
.stack .front { background: linear-gradient(#d2d4d7, #a8acb2); }
.stack svg { width: 29px; height: 29px; }
.task-scroll { flex: 0 0 15px; margin-left: 4px; border: 1px solid #8a96a4; background: linear-gradient(#94a5b5, #45444e); }
.grip.second { margin: 4px 4px 4px 7px; }
.desktop { flex: 0 0 48px; line-height: 36px; }
.chevrons { flex: 0 0 17px; font-size: 14px; font-weight: bold; line-height: 14px; }
.tray { display: flex; flex: 1; justify-content: space-between; align-items: center; padding-top: 1px; }
.tray svg { width: 16px; height: 16px; }
.clock { display: flex; flex: 0 0 74px; flex-direction: column; justify-content: center; line-height: 16px; text-align: center; }
.peek-desktop { flex: 0 0 16px; border: 1px solid #8d949b; border-right: 0; background: linear-gradient(135deg, #7b858e, #33383d); }

.recorder { position: absolute; top: 6px; left: 970px; display: flex; flex-direction: column; width: 212px; height: 124px; padding: 0 6px 6px; border: 2px solid #777; border-radius: 7px; background: #fbfcfc; box-shadow: 0 0 8px rgba(0, 0, 0, .5); color: #222; }
.rec-title { display: flex; flex: 0 0 26px; align-items: center; gap: 6px; padding-left: 1px; }
.rec-title > svg { width: 13px; height: 15px; }
.rec-sys { display: flex; align-self: flex-start; margin-left: auto; border: 1px solid #888; border-top: 0; border-radius: 0 0 4px 4px; }
.rec-sys button { display: grid; place-items: center; width: 26px; height: 16px; border-right: 1px solid #aaa; }
.rec-sys button:last-child { width: 42px; border: 0; }
.rec-sys svg { width: 14px; height: 14px; }
.rec-body { flex: 1; border: 1px solid #888; background: #f3f3f3; }
.rec-info { display: flex; gap: 4px; height: 24px; padding: 3px 2px 2px 5px; border-bottom: 1px solid #888; }
.menu { display: flex; flex: 0 0 60px; align-items: center; justify-content: space-between; height: 17px; padding: 0 5px; border: 1px solid #888; border-radius: 4px; background: linear-gradient(#eee, #ccc); color: #999; }
.menu svg { width: 8px; height: 8px; }
.time { display: flex; flex: 1; align-items: center; justify-content: space-between; height: 19px; padding: 0 6px 0 9px; border: 1px solid #aaa; font-family: "Liberation Sans", sans-serif; white-space: nowrap; }
.fps { display: flex; align-items: center; gap: 3px; }
.fps i { width: 12px; height: 12px; border-radius: 50%; background: #0bed0b; }
.rec-controls { display: flex; padding: 5px 3px; }
.rec-controls button { display: grid; place-items: center; width: 52px; height: 55px; border: 2px solid #999; border-radius: 5px; background: linear-gradient(135deg, #bbb, #eee 50%, #aaa); }
.rec-controls .rec { width: 51px; }
.rec-controls .drop { width: 16px; margin-right: 8px; }
.rec-controls .stop { margin-left: 11px; }
.rec-controls svg { width: 24px; height: 24px; }
.rec-controls .drop svg { width: 8px; height: 8px; }
.edge-window { position: absolute; top: 10px; left: 0; width: 5px; height: 90px; border-right: 2px solid #333; border-radius: 0 5px 5px 0; background: linear-gradient(#dce5eb, #bbb 30%, #a8ddea 60%, #d9e9ee); box-shadow: 2px 3px 9px rgba(0, 0, 0, .6); }
</style>
